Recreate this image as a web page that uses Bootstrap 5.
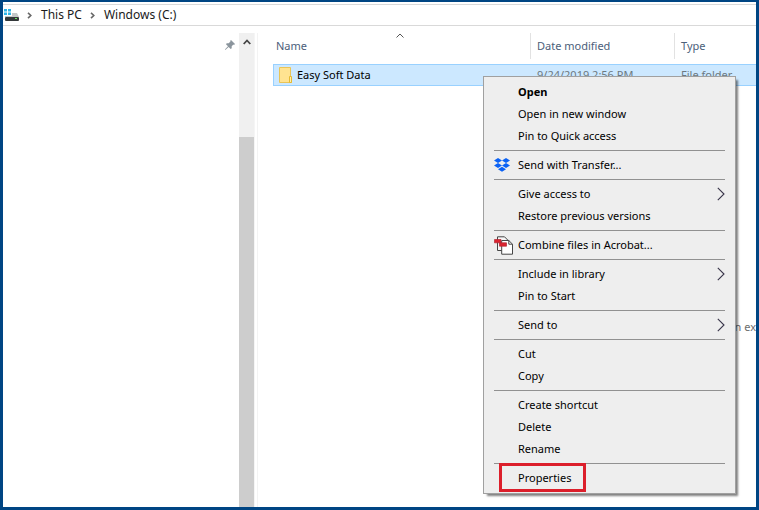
<!DOCTYPE html>
<html lang="en">
<head>
<meta charset="utf-8">
<meta name="viewport" content="width=device-width, initial-scale=1">
<title>Windows (C:)</title>
<link href="https://cdn.jsdelivr.net/npm/bootstrap@5.3.0/dist/css/bootstrap.min.css" rel="stylesheet">
<style>
  body { font-family: "Noto Sans", "Open Sans", sans-serif; font-size: 11px; line-height: 22px; color: #000; }
  .explorer { border: 3px solid #004583; border-top-width: 2px; background: #fff; }
  .address { margin-top: 2px; height: 22px; border-top: 1px solid #d9d9d9; border-bottom: 1px solid #d9d9d9; font-size: 12px; }
  .address a { color: #1a1a1a; text-decoration: none; }
  .address .step { margin: 0 9px 0 8px; }
  .panes { padding-top: 7px; }
  .sidebar { width: 236px; }
  .sidebar .pin { margin: 7px 4px 0 0; }
  .scroller { width: 16px; background: #f0f0f0; border-right: 1px solid #f5f5f5; }
  .scroller button { height: 17px; }
  .scroller .thumb { margin-top: 87px; background: #cdcdcd; }
  .files { border-left: 1px solid #f3f3f3; margin-left: 2px; padding-left: 15px; }
  .listing { table-layout: fixed; width: 100%; border-collapse: separate; border-spacing: 0; }
  .listing .col-name { width: 258px; }
  .listing .col-date { width: 144px; }
  .listing th { padding: 0; height: 31px; font-weight: 400; color: #4c607a; vertical-align: top; }
  .listing th > div { height: 26px; border-right: 1px solid #e2e2e2; padding: 0 6px 0 3px; }
  .listing th:not(:first-child) > div { padding-left: 6px; }
  .listing th:last-child > div { border-right: 0; }
  .listing th span { line-height: 16px; }
  .listing td { height: 22px; padding: 0 0 0 6px; line-height: 20px; background: #cce8ff; border-top: 1px solid #99d1ff; border-bottom: 1px solid #99d1ff; color: #6d7880; white-space: nowrap; }
  .listing td:first-child { border-left: 1px solid #99d1ff; padding-left: 4px; color: #000; }
  .preview-note { margin-top: 230px; color: #6d6d6d; }
  .context { left: 483px; top: 76px; width: 253px; padding: 4px 10px; background: #eee; border: 1px solid #a0a0a0; box-shadow: 3px 3px 2px -1px rgba(0,0,0,.5); }
  .context button { height: 22px; font-size: 11px; line-height: 22px; color: #000; }
  .context .glyph { width: 24px; height: 22px; }
  .context hr { margin: 3px 0; height: 1px; border: 0; background: #919191; opacity: 1; }
  .context .marked { margin: -4px 0 -3px 5px; height: 29px; width: 87px; border: 3px solid #dc1f2b; padding: 0 0 0 16px; }
</style>
<script src="https://cdn.jsdelivr.net/npm/bootstrap@5.3.0/dist/js/bootstrap.bundle.min.js"></script>
</head>
<body>
<div class="explorer min-vh-100 d-flex flex-column position-relative overflow-hidden">
  <nav class="address d-flex align-items-center flex-shrink-0" aria-label="Address">
    <svg width="16" height="14" viewBox="0 0 16 14" aria-hidden="true">
      <path fill="#2db4e8" d="M1 1h3v2.500H1zM5 1h3v2.500H5zM1 4.500h3V7H1zM5 4.500h3V7H5z"/>
      <path fill="#c4c8c9" d="M9 5h5l2 4H2V8h7z"/>
      <rect x="2" y="9" width="14" height="4" rx="1" fill="#34383a"/>
      <rect x="12" y="10" width="2" height="1" fill="#69e260"/>
    </svg>
    <svg class="step" width="5" height="7" viewBox="0 0 5 7" fill="none" stroke="#686868" stroke-width="1.6" aria-hidden="true"><path d="M1 .8 3.8 3.5 1 6.2"/></svg>
    <a href="#pc">This PC</a>
    <svg class="step" width="5" height="7" viewBox="0 0 5 7" fill="none" stroke="#686868" stroke-width="1.6" aria-hidden="true"><path d="M1 .8 3.8 3.5 1 6.2"/></svg>
    <a href="#c">Windows (C:)</a>
  </nav>
  <div class="panes d-flex flex-grow-1">
    <aside class="sidebar d-flex justify-content-end align-items-start flex-shrink-0">
      <svg class="pin" width="10" height="10" viewBox="0 0 10 10" aria-hidden="true"><path fill="#8b959d" d="M6 0 10 4 9 5 8.400 4.600 6.700 6.300 6.700 8.300 5.700 9 3.600 6.900.6 9.800 0 9.700.1 9.200 3 6.300 1 4.200 1.700 3.300 3.700 3.300 5.500 1.600 5.100 1Z"/></svg>
    </aside>
    <div class="scroller d-flex flex-column flex-shrink-0">
      <button type="button" class="btn p-0 border-0 rounded-0 d-flex align-items-center justify-content-center" aria-label="Scroll up">
        <svg width="8" height="6" viewBox="0 0 8 6" fill="none" stroke="#454545" stroke-width="1.800"><path d="M.7 5 4 1.500 7.300 5"/></svg>
      </button>
      <div class="thumb flex-grow-1"></div>
    </div>
    <main class="files flex-grow-1">
      <table class="listing">
        <colgroup><col class="col-name"><col class="col-date"><col></colgroup>
        <thead>
          <tr>
            <th scope="col" aria-sort="ascending"><div class="d-flex flex-column">
              <svg class="align-self-center" width="8" height="5" viewBox="0 0 8 5" fill="none" stroke="#555"><path d="M.5 4.500 4 1 7.500 4.500"/></svg>
              <span>Name</span></div></th>
            <th scope="col"><div class="d-flex align-items-center">Date modified</div></th>
            <th scope="col"><div class="d-flex align-items-center">Type</div></th>
          </tr>
        </thead>
        <tbody>
          <tr>
            <td><div class="d-flex align-items-center gap-1">
              <svg width="15" height="16" viewBox="0 0 15 16" aria-hidden="true"><path fill="#ffe391" stroke="#e9c458" d="M1.500.5h11v9l1 1v5h-12z"/><path fill="#fff0ae" stroke="#e5b932" d="M11.500 9.500h2v6h-2z"/></svg>
              Easy Soft Data</div></td>
            <td>9/24/2019 2:56 PM</td>
            <td>File folder</td>
          </tr>
        </tbody>
      </table>
      <p class="preview-note text-end mb-0">n ex</p>
    </main>
  </div>
</div>

<div class="context position-absolute" role="menu">
  <button type="button" role="menuitem" class="btn border-0 rounded-0 p-0 d-flex w-100 fw-bold"><span class="glyph"></span>Open</button>
  <button type="button" role="menuitem" class="btn border-0 rounded-0 p-0 d-flex w-100"><span class="glyph"></span>Open in new window</button>
  <button type="button" role="menuitem" class="btn border-0 rounded-0 p-0 d-flex w-100"><span class="glyph"></span>Pin to Quick access</button>
  <hr>
  <button type="button" role="menuitem" class="btn border-0 rounded-0 p-0 d-flex w-100"><span class="glyph d-flex align-items-center">
    <svg width="16" height="14" viewBox="0 0 16 14" fill="#0b62f5"><path d="M4 0 8 2.500 4 5 0 2.500ZM12 0l4 2.500L12 5 8 2.500ZM4 5l4 2.500L4 10 0 7.500ZM12 5l4 2.500-4 2.500-4-2.500ZM8 8.800l4 2.500L8 13.800 4 11.300Z"/></svg></span>Send with Transfer...</button>
  <hr>
  <button type="button" role="menuitem" class="btn border-0 rounded-0 p-0 d-flex align-items-center w-100"><span class="glyph"></span>Give access to
    <svg class="ms-auto" width="8" height="14" viewBox="0 0 8 14" fill="none" stroke="#39354a" stroke-width="1.100"><path d="M.8 .8 7 7 .8 13.200"/></svg></button>
  <button type="button" role="menuitem" class="btn border-0 rounded-0 p-0 d-flex w-100"><span class="glyph"></span>Restore previous versions</button>
  <hr>
  <button type="button" role="menuitem" class="btn border-0 rounded-0 p-0 d-flex w-100"><span class="glyph d-flex align-items-center">
    <svg width="20" height="19" viewBox="0 0 20 19" stroke="#464646" stroke-linejoin="round"><path fill="#f6f6f6" d="M3.500.8h7l3.500 3.500v10.200h-10.500z"/><path fill="#fff" d="M7.700 4.500h7.100l3.700 3.700v10H7.700z"/><path fill="none" d="M14.800 4.500v3.700h3.700"/><path fill="#dc2430" stroke="#b32833" stroke-width=".7" d="M.5 3.500H7v3.300H.5zM5.500 6.800h7v3.400h-7z"/></svg></span>Combine files in Acrobat...</button>
  <hr>
  <button type="button" role="menuitem" class="btn border-0 rounded-0 p-0 d-flex align-items-center w-100"><span class="glyph"></span>Include in library
    <svg class="ms-auto" width="8" height="14" viewBox="0 0 8 14" fill="none" stroke="#39354a" stroke-width="1.100"><path d="M.8 .8 7 7 .8 13.200"/></svg></button>
  <button type="button" role="menuitem" class="btn border-0 rounded-0 p-0 d-flex w-100"><span class="glyph"></span>Pin to Start</button>
  <hr>
  <button type="button" role="menuitem" class="btn border-0 rounded-0 p-0 d-flex align-items-center w-100"><span class="glyph"></span>Send to
    <svg class="ms-auto" width="8" height="14" viewBox="0 0 8 14" fill="none" stroke="#39354a" stroke-width="1.100"><path d="M.8 .8 7 7 .8 13.200"/></svg></button>
  <hr>
  <button type="button" role="menuitem" class="btn border-0 rounded-0 p-0 d-flex w-100"><span class="glyph"></span>Cut</button>
  <button type="button" role="menuitem" class="btn border-0 rounded-0 p-0 d-flex w-100"><span class="glyph"></span>Copy</button>
  <hr>
  <button type="button" role="menuitem" class="btn border-0 rounded-0 p-0 d-flex w-100"><span class="glyph"></span>Create shortcut</button>
  <button type="button" role="menuitem" class="btn border-0 rounded-0 p-0 d-flex w-100"><span class="glyph"></span>Delete</button>
  <button type="button" role="menuitem" class="btn border-0 rounded-0 p-0 d-flex w-100"><span class="glyph"></span>Rename</button>
  <hr>
  <button type="button" role="menuitem" class="btn marked rounded-0 d-flex align-items-center">Properties</button>
</div>
</body>
</html>
